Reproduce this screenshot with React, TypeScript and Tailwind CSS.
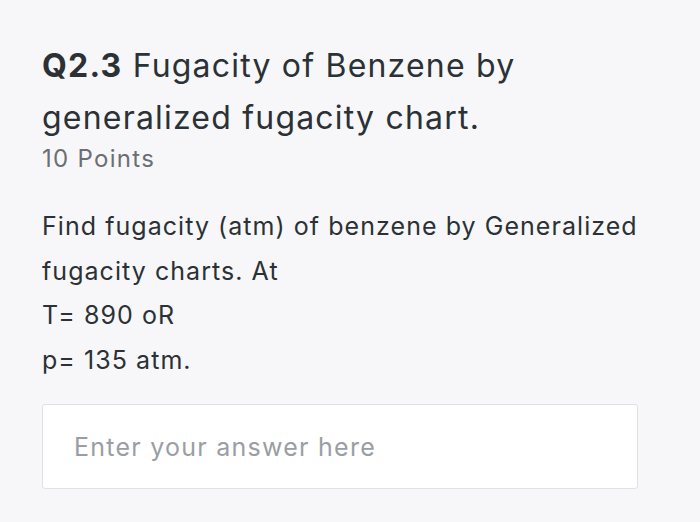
export default function App() {
  return (
    <div className="min-h-[522px] w-[700px] bg-[#f7f7f9] pl-[42px] pr-[40px] pt-[40px] text-[#2b3135] [font-family:Inter,'Liberation_Sans',sans-serif]">
      <h1 className="text-[32px] leading-[52px] tracking-[1.2px]">
        <span className="font-bold">Q2.3</span> Fugacity of Benzene by generalized fugacity chart.
      </h1>
      <div className="text-[24px] leading-[30px] tracking-[1.3px] text-[#6b6f73]">10 Points</div>
      <div className="mt-[30px] text-[25px] leading-[44.5px] tracking-[1.05px]">
        <p>Find fugacity (atm) of benzene by Generalized fugacity charts. At</p>
        <p>T= 890 oR</p>
        <p>p= 135 atm.</p>
      </div>
      <div className="mt-[22px] w-[596px]">
        <input
          placeholder="Enter your answer here"
          className="h-[85px] w-full rounded-[3px] border border-[#dfe1e4] bg-white px-[31px] text-[25px] tracking-[1.25px] text-[#2b3135] outline-none placeholder:text-[#9a9ea3]"
        />
      </div>
    </div>
  );
}
